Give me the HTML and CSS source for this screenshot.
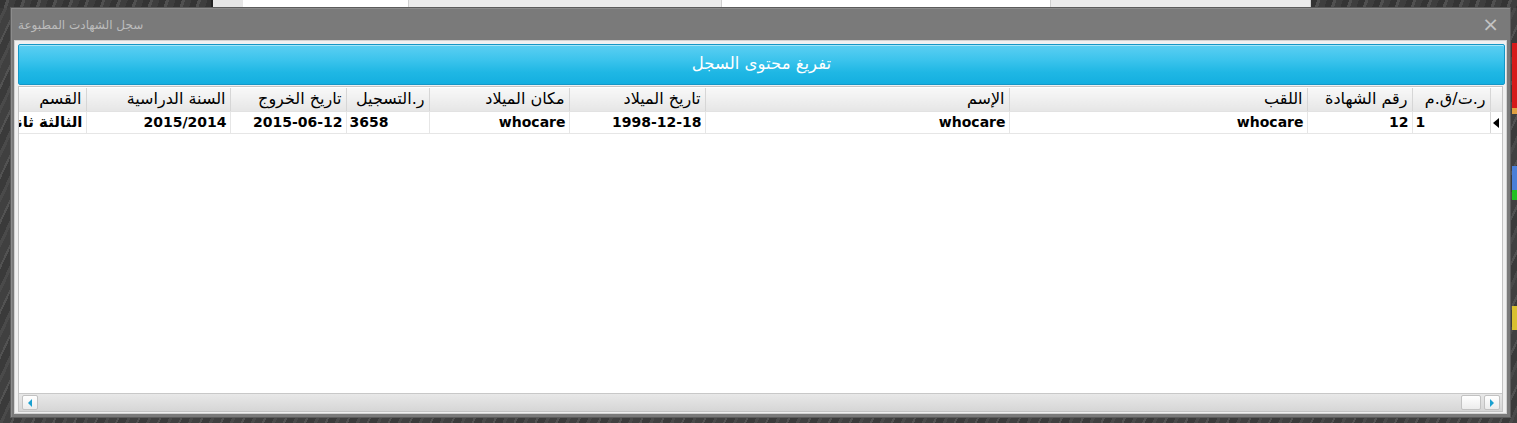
FILE: index.html
```html
<!DOCTYPE html>
<html lang="ar">
<head>
<meta charset="utf-8">
<title>سجل الشهادت المطبوعة</title>
<link rel="stylesheet" href="styles.css">
</head>
<body>
<div class="desktop">
  <div class="backapp">
    <div class="seg seg-photo seg-a"></div>
    <div class="seg seg-grey seg-b"></div>
    <div class="seg seg-white seg-c"></div>
    <div class="seg seg-cell seg-d"></div>
    <div class="seg seg-white seg-e"></div>
    <div class="seg seg-cell seg-f"></div>
    <div class="seg seg-photo seg-g"></div>
  </div>
  <div class="spot spot-red"></div>
  <div class="spot spot-orange"></div>
  <div class="spot spot-blue"></div>
  <div class="spot spot-green"></div>
  <div class="spot spot-yellow"></div>

  <div class="window">
    <div class="titlebar">
      <span class="title">سجل الشهادت المطبوعة</span>
      <span class="close">×</span>
    </div>
    <div class="panel">
      <button class="dump" type="button">تفريغ محتوى السجل</button>
      <div class="grid">
        <div class="viewport">
          <table class="records" dir="rtl">
            <colgroup>
              <col class="w-rh">
              <col class="w-num">
              <col class="w-cert">
              <col class="w-lname">
              <col class="w-name">
              <col class="w-bdate">
              <col class="w-bplace">
              <col class="w-reg">
              <col class="w-out">
              <col class="w-year">
              <col class="w-class">
            </colgroup>
            <thead>
              <tr>
                <th class="rh"></th>
                <th>ر.ت/ق.م</th>
                <th>رقم الشهادة</th>
                <th>اللقب</th>
                <th>الإسم</th>
                <th>تاريخ الميلاد</th>
                <th>مكان الميلاد</th>
                <th>ر.التسجيل</th>
                <th>تاريخ الخروج</th>
                <th>السنة الدراسية</th>
                <th>القسم</th>
              </tr>
            </thead>
            <tbody>
              <tr>
                <td class="rh"><span class="pointer"></span></td>
                <td class="start">1</td>
                <td>12</td>
                <td>whocare</td>
                <td>whocare</td>
                <td>1998-12-18</td>
                <td>whocare</td>
                <td class="start">3658</td>
                <td>2015-06-12</td>
                <td>2015/2014</td>
                <td class="ar">الثالثة ثانوي</td>
              </tr>
            </tbody>
          </table>
        </div>
        <div class="hscroll">
          <span class="sbtn sbtn-left"><span class="tri tri-left"></span></span>
          <span class="track"></span>
          <span class="thumb"></span>
          <span class="sbtn sbtn-right"><span class="tri tri-right"></span></span>
        </div>
      </div>
    </div>
  </div>
</div>
</body>
</html>
```
FILE: styles.css
```css
* { box-sizing: border-box; }
html, body { margin: 0; padding: 0; }
body {
  width: 1517px;
  height: 423px;
  overflow: hidden;
  background: #4a4a4a;
  font-family: "DejaVu Sans", sans-serif;
}
.desktop {
  position: relative;
  width: 1517px;
  height: 423px;
  background:
    repeating-linear-gradient(115deg, #3a3a3a 0 7px, #4a4a4a 7px 10px, #404040 10px 17px, #525252 17px 19px);
}
.backapp {
  display: flex;
  height: 8px;
}
.seg { height: 8px; }
.seg-photo {
  background: repeating-linear-gradient(110deg, #343434 0 6px, #505050 6px 9px, #3e3e3e 9px 15px);
}
.seg-a { width: 213px; border-right: 2px solid #222; }
.seg-b { width: 30px; background: #e6e6e6; }
.seg-white { background: #ffffff; }
.seg-cell { background: #ececec; border-left: 1px solid #d0d0d0; border-right: 1px solid #d0d0d0; }
.seg-c { width: 165px; }
.seg-d { width: 314px; }
.seg-e { width: 328px; }
.seg-f { width: 261px; }
.seg-g { flex: 1; }

.spot { position: absolute; left: 1512px; width: 5px; }
.spot-red { top: 43px; height: 65px; background: #d61a1a; }
.spot-orange { top: 108px; height: 6px; background: #e0a040; }
.spot-blue { top: 166px; height: 24px; background: #4a7fd8; }
.spot-green { top: 190px; height: 10px; background: #22c022; }
.spot-yellow { top: 306px; height: 24px; background: #d8c030; }

.window {
  position: absolute;
  left: 10px;
  top: 7px;
  width: 1501px;
  height: 411px;
  background: #7a7a7a;
  border: 1px solid #5c5c5c;
  box-shadow: inset 1px 1px 0 #8c8c8c;
  padding: 0 3px 3px 3px;
  display: flex;
  flex-direction: column;
}
.titlebar {
  height: 32px;
  flex: none;
  display: flex;
  align-items: center;
  justify-content: space-between;
  padding: 0 8px 0 4px;
}
.title {
  color: #bcbcbc;
  font-size: 12px;
  margin-top: 2px;
}
.close {
  color: #c4c4c4;
  font-size: 20px;
  line-height: 1;
  margin-top: 0;
}
.panel {
  flex: 1;
  background: #f0f0f0;
  border: 1px solid #d2d2d2;
  padding: 3px 1px 1px 3px;
  display: flex;
  flex-direction: column;
}
.dump {
  flex: none;
  height: 41px;
  width: 100%;
  margin: 0;
  border: 1px solid #1596c6;
  border-radius: 2px;
  background: linear-gradient(#5ccff2 0%, #3ac3ec 40%, #1fb7e4 70%, #14afe0 100%);
  box-shadow: inset 0 1px 0 #a6e6f8;
  color: #ffffff;
  font-family: "DejaVu Sans", sans-serif;
  font-size: 16.5px;
  padding: 0 0 2px 0;
}
.grid {
  flex: 1;
  margin: 1px 2px 0 0;
  border: 1px solid #c4c4c4;
  background: #ffffff;
  display: flex;
  flex-direction: column;
  min-height: 0;
}
.viewport {
  flex: 1;
  overflow: hidden;
  direction: rtl;
  padding-top: 1px;
}
.records {
  table-layout: fixed;
  border-collapse: collapse;
  width: 1515px;
  direction: rtl;
}
.w-rh { width: 12px; }
.w-num { width: 78px; }
.w-cert { width: 105px; }
.w-lname { width: 298px; }
.w-name { width: 304px; }
.w-bdate { width: 136px; }
.w-bplace { width: 140px; }
.w-reg { width: 83px; }
.w-out { width: 116px; }
.w-year { width: 144px; }
.w-class { width: 99px; }

.records th {
  height: 23px;
  padding: 0 4px 0 2px;
  font-weight: normal;
  font-size: 16px;
  line-height: 20px;
  color: #000;
  text-align: right;
  white-space: nowrap;
  overflow: hidden;
  background: linear-gradient(#f8f8f8, #e6e6e6);
  border-left: 1px solid #d6d6d6;
  border-bottom: 1px solid #e2e2e2;
}
.records td {
  height: 22px;
  padding: 0 3px 0 3px;
  font-weight: bold;
  font-size: 14px;
  color: #000;
  text-align: right;
  white-space: nowrap;
  overflow: hidden;
  border-left: 1px solid #e6e6e6;
  border-bottom: 1px solid #e6e6e6;
}
.records td.ar { font-size: 15px; line-height: 20px; }
.records td.start { text-align: left; }
.records .rh {
  padding: 0;
  background: linear-gradient(#f8f8f8, #e6e6e6);
  border-left: 1px solid #d6d6d6;
}
.records td.rh { background: #ffffff; text-align: center; }
.pointer {
  display: inline-block;
  width: 0;
  height: 0;
  border-top: 5px solid transparent;
  border-bottom: 5px solid transparent;
  border-right: 6px solid #000;
  vertical-align: middle;
}

.hscroll {
  flex: none;
  height: 18px;
  border-top: 1px solid #c8c8c8;
  background: linear-gradient(#e8e8e8, #d6d6d6);
  display: flex;
  align-items: center;
  padding: 0 2px 0 3px;
  gap: 3px;
}
.track { flex: 1; }
.sbtn, .thumb {
  height: 15px;
  border: 1px solid #c2c2c2;
  border-radius: 2px;
  background: linear-gradient(#ffffff, #ececec);
  display: flex;
  align-items: center;
  justify-content: center;
}
.sbtn { width: 16px; }
.thumb { width: 20px; }
.tri { width: 0; height: 0; border-top: 4px solid transparent; border-bottom: 4px solid transparent; }
.tri-left { border-right: 4px solid #1aa0d0; }
.tri-right { border-left: 4px solid #1aa0d0; }
```
